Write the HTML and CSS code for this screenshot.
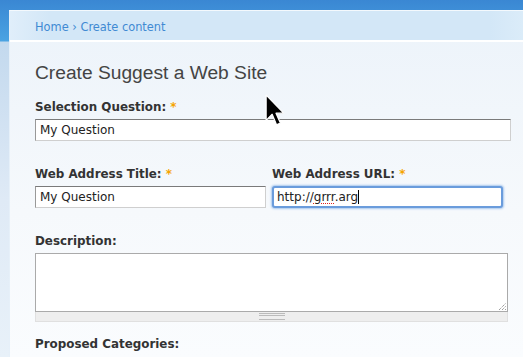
FILE: index.html
```html
<!DOCTYPE html>
<html>
<head>
<meta charset="utf-8">
<link rel="stylesheet" href="styles.css">
</head>
<body>
<div class="panel">
  <div class="crumbs"><a>Home</a> › <a>Create content</a></div>
  <div class="content">
    <h1 class="title">Create Suggest a Web Site</h1>
    <div class="field">
      <label class="label">Selection Question: <span class="req">*</span></label>
      <div class="input wide">My Question</div>
    </div>
    <div class="row">
      <div class="col">
        <label class="label">Web Address Title: <span class="req">*</span></label>
        <div class="input half">My Question</div>
      </div>
      <div class="col">
        <label class="label">Web Address URL: <span class="req">*</span></label>
        <div class="input half focus">http://<span class="typo">grrr</span>.arg<span class="caret"></span></div>
      </div>
    </div>
    <div class="field">
      <label class="label">Description:</label>
      <div class="textarea"><svg class="resize" width="8" height="8" viewBox="0 0 8 8"><path d="M1 8 L8 1 M4 8 L8 4 M7 8 L8 7" stroke="#777" stroke-width="1" stroke-dasharray="1 1"/></svg></div>
      <div class="grippie"><span class="grip"></span></div>
    </div>
    <div class="field last">
      <label class="label">Proposed Categories:</label>
    </div>
  </div>
</div>
<svg class="cursor" width="22" height="34" viewBox="0 0 20 31">
  <path d="M1 1 L1 24 L6.5 18.5 L10.5 28 L14 26.5 L10 17.5 L17 17.5 Z" fill="#000" stroke="#fff" stroke-width="1.1" stroke-linejoin="round"/>
</svg>
</body>
</html>
```
FILE: styles.css
```css
html, body {
  margin: 0;
  padding: 0;
  height: 100%;
  overflow: hidden;
}
body {
  position: relative;
  background: linear-gradient(to bottom, #3a87d3 0, #4aa3e2 41px, #c3d9ee 42px, #dfeaf6 200px, #e8f1f9 357px);
  padding: 10px 0 0 9px;
  box-sizing: border-box;
  font-family: "DejaVu Sans", Verdana, sans-serif;
}
.panel {
  border-top: 1px solid #f4f9fd;
  border-left: 1px solid #e6f0f9;
  height: 100%;
  background: linear-gradient(to bottom, #ecf3fa 0, #f6f9fc 200px, #fafcfe 346px);
}
.crumbs {
  height: 31px;
  box-sizing: border-box;
  padding: 10px 0 0 25px;
  font-size: 11.4px;
  line-height: 13px;
  color: #3f8ad3;
  background: linear-gradient(to right, #e0eefa 0, #d3e7f7 40px, #d3e7f7 480px, #dbecf9 100%);
  border-bottom: 2px solid #ffffff;
}
.crumbs a { color: #3f8ad3; }
.content {
  padding: 20px 0 0 25px;
}
.title {
  margin: 0 0 15px;
  font-family: "Liberation Sans", Arial, sans-serif;
  font-weight: normal;
  font-size: 19.2px;
  line-height: 22px;
  color: #444;
}
.field, .col { display: flex; flex-direction: column; }
.label {
  font-size: 11.9px;
  line-height: 16px;
  font-weight: bold;
  color: #333;
  margin-bottom: 4px;
}
.req { color: #f5a400; }
.input {
  box-sizing: border-box;
  height: 22px;
  background: #fff;
  border: 1px solid #cfcfcf;
  border-top-color: #7a7a7a;
  border-left-color: #999;
  font-size: 12px;
  line-height: 20px;
  padding: 0 4px;
  color: #222;
  white-space: nowrap;
}
.wide { width: 476px; }
.half { width: 231px; }
.row {
  display: flex;
  align-items: flex-start;
  gap: 6px;
  margin-top: 25px;
}
.row + .field { margin-top: 25px; }
.focus {
  border: 2px solid #6a9cdc;
  border-radius: 3px;
  box-shadow: 0 0 2px 1px #a9c8ee;
  line-height: 18px;
  padding: 0 3px;
}
.typo {
  text-decoration: underline dotted #e02020;
  text-underline-offset: 2px;
}
.caret {
  display: inline-block;
  width: 1px;
  height: 14px;
  background: #000;
  vertical-align: -3px;
}
.textarea {
  position: relative;
  box-sizing: border-box;
  width: 473px;
  height: 59px;
  background: #fff;
  border: 1px solid #aaa;
}
.resize { position: absolute; right: 1px; bottom: 1px; }
.grippie {
  width: 473px;
  height: 10px;
  box-sizing: border-box;
  background: #eeeeee;
  border: 1px solid #e0e0e0;
  border-top: 0;
  display: flex;
  justify-content: center;
  align-items: center;
}
.grip {
  width: 26px;
  height: 5px;
  border-top: 1px solid #bbb;
  border-bottom: 1px solid #bbb;
  background: linear-gradient(to bottom, transparent 1px, #bbb 1px, #bbb 2px, transparent 2px);
}
.field + .field { margin-top: 25px; }
.field + .field.last { margin-top: 14px; }
.cursor {
  position: absolute;
  left: 265px;
  top: 94px;
}
```
